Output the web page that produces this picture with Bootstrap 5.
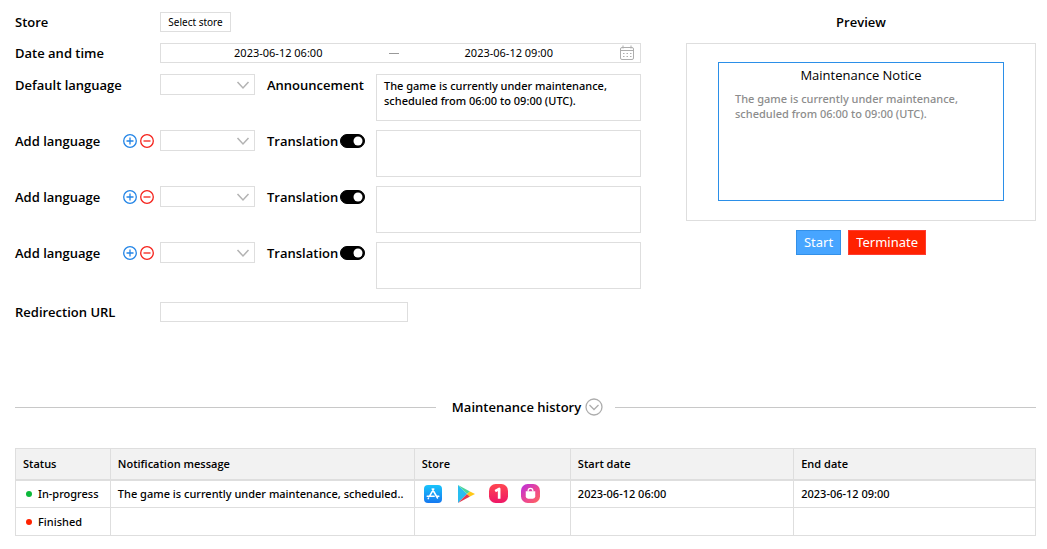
<!DOCTYPE html>
<html lang="en">
<head>
<meta charset="utf-8">
<meta name="viewport" content="width=device-width, initial-scale=1">
<title>Maintenance</title>
<link href="https://cdn.jsdelivr.net/npm/bootstrap@5.3.0/dist/css/bootstrap.min.css" rel="stylesheet">
<style>
  body { font-family: "Noto Sans", "Open Sans", sans-serif; font-size: 11px; line-height: 16px; color: #000; background: #fff; }
  .page { padding: 12px 11px 12px 15px; }
  .top-area { display: grid; grid-template-columns: minmax(0, 626fr) minmax(0, 350fr); column-gap: 45px; }
  .setting { display: grid; grid-template-columns: 145px 95px 121px minmax(0, 1fr); align-items: start; min-height: 21px; margin-bottom: 10px; }
  .setting .wide { grid-column: 2 / -1; }
  .setting label, .setting .caption, .heading { font-family: "Open Sans", "Noto Sans", sans-serif; font-size: 13px; line-height: 20px; font-weight: 600; margin: 0; }
  .language label { padding-top: 1px; }
  .setting .second { margin-left: 12px; }
  .form-switch { gap: 2px; }
  .box, .box.form-control, .box.form-select { border: 1px solid #dedede; border-radius: 0; background-color: #fff; color: #000; font-size: 11px; line-height: 15px; padding: 0 7px; height: 21px; min-height: 0; }
  .box.form-select { background-size: 14px 14px; background-position: right 4px center; background-image: url("data:image/svg+xml,%3csvg xmlns='http://www.w3.org/2000/svg' viewBox='0 0 14 14'%3e%3cpath fill='none' stroke='%23b3b3b3' stroke-width='1.5' d='M1.500 4l5.500 6 5.500-6'/%3e%3c/svg%3e"); }
  .box.message { height: 47px; padding: 3px 7px; margin-bottom: -1px; resize: none; overflow: hidden; font-weight: 500; }
  .box.store-btn { font-size: 10px; width: 71px; height: 20px; padding: 0; }
  .dates input { border: 0; background: none; text-align: center; padding: 0; min-width: 0; color: #000; line-height: 16px; }
  .box.dates { padding: 0 5px 0 7px; height: 20px; }
  .dash { width: 10px; height: 1px; background: #999; flex: none; }
  .icons { gap: 3px; padding-right: 6px; }
  .round { border: 0; padding: 0; background: none; line-height: 0; }
  .form-switch .form-check-input { width: 25px; height: 14px; margin: 1px 0 0; float: none; border: 1px solid #000; background-color: #000; }
  .box.url { width: 248px; max-width: 100%; height: 20px; }
  .title { margin-bottom: 11px; }
  .preview { border: 1px solid #dedede; height: 178px; padding: 18px 31px 19px 31px; }
  .notice { border: 1px solid #2b8fe8; height: 139px; padding: 2px 16px; color: #8c8c8c; line-height: 15px; font-weight: 500; }
  .notice h3 { font-family: "Open Sans", "Noto Sans", sans-serif; font-size: 13px; line-height: 20px; font-weight: 500; color: #000; margin: 0 0 6px; }
  .actions { gap: 7px; margin-top: 9px; }
  .action { border-radius: 0; font-size: 13px; line-height: 17px; padding: 3px 7px; color: #fff; }
  .start { background: #47a5ff; border-color: #3390e8; }
  .terminate { background: #ff2200; border-color: #ff3b30; }
  .history { margin: 65px 0 31px; }
  .rule { height: 1px; background: #c8c8c8; flex: 1; }
  .records { table-layout: fixed; border-color: #dedede; color: #000; }
  .records th, .records td { padding: 0 7px; vertical-align: middle; height: 28px; color: #000; white-space: nowrap; overflow: hidden; font-weight: 500; }
  .records th { height: 31px; font-family: "Open Sans", "Noto Sans", sans-serif; font-weight: 600; background: #f2f2f2; border-bottom-width: 2px; }
  .c-status { width: 9.3%; } .c-message { width: 29.8%; } .c-store { width: 15.3%; } .c-start { width: 21.9%; }
  .dot { width: 6px; height: 6px; border-radius: 50%; margin: 0 6px 0 3px; }
  .live { background: #0bb83a; } .done { background: #ff2200; }
  .stores { gap: 13px; padding-left: 1px; }
</style>
</head>
<body>
<svg class="d-none">
  <symbol id="plus" viewBox="0 0 14 14"><g fill="none" stroke="#2284e6" stroke-width="1.300"><circle cx="7" cy="7" r="6.300"/><path d="M3.500 7h7M7 3.500v7"/></g></symbol>
  <symbol id="minus" viewBox="0 0 14 14"><g fill="none" stroke="#f5221b" stroke-width="1.300"><circle cx="7" cy="7" r="6.300"/><path d="M3.500 7h7"/></g></symbol>
</svg>
<main class="page">
  <div class="top-area">
    <form>
      <div class="setting"><span class="caption">Store</span><div class="wide"><button type="button" class="box store-btn">Select store</button></div></div>
      <div class="setting">
        <label for="from">Date and time</label>
        <div class="wide box dates d-flex align-items-center">
          <input class="flex-fill" id="from" type="text" value="2023-06-12 06:00">
          <span class="dash"></span>
          <input class="flex-fill" type="text" aria-label="End" value="2023-06-12 09:00">
          <svg class="flex-shrink-0" width="16" height="16" viewBox="0 0 16 16" fill="none" stroke="#adadad"><rect x="1.500" y="2.500" width="13" height="12" rx="1.500"/><path d="M1.500 5.500h13M4 .5v3M12 .5v3"/><path d="M4 8.500h9M4 11.500h9" stroke-dasharray="1.500 2"/></svg>
        </div>
      </div>
      <div class="setting language">
        <label for="lang0">Default language</label>
        <select class="box form-select" id="lang0"><option></option></select>
        <label class="second" for="msg0">Announcement</label>
        <textarea class="box message form-control" id="msg0">The game is currently under maintenance, scheduled from 06:00 to 09:00 (UTC).</textarea>
      </div>
      <div class="setting language">
        <div class="d-flex align-items-center"><label class="me-auto" for="lang1">Add language</label><div class="icons d-flex"><button type="button" class="round" aria-label="Add"><svg width="14" height="14"><use href="#plus"/></svg></button><button type="button" class="round" aria-label="Remove"><svg width="14" height="14"><use href="#minus"/></svg></button></div></div>
        <select class="box form-select" id="lang1"><option></option></select>
        <div class="second form-switch d-flex align-items-center p-0"><label for="tr1">Translation</label><input class="form-check-input" type="checkbox" role="switch" id="tr1" checked></div>
        <textarea class="box message form-control" aria-label="Translation text 1"></textarea>
      </div>
      <div class="setting language">
        <div class="d-flex align-items-center"><label class="me-auto" for="lang2">Add language</label><div class="icons d-flex"><button type="button" class="round" aria-label="Add"><svg width="14" height="14"><use href="#plus"/></svg></button><button type="button" class="round" aria-label="Remove"><svg width="14" height="14"><use href="#minus"/></svg></button></div></div>
        <select class="box form-select" id="lang2"><option></option></select>
        <div class="second form-switch d-flex align-items-center p-0"><label for="tr2">Translation</label><input class="form-check-input" type="checkbox" role="switch" id="tr2" checked></div>
        <textarea class="box message form-control" aria-label="Translation text 2"></textarea>
      </div>
      <div class="setting language">
        <div class="d-flex align-items-center"><label class="me-auto" for="lang3">Add language</label><div class="icons d-flex"><button type="button" class="round" aria-label="Add"><svg width="14" height="14"><use href="#plus"/></svg></button><button type="button" class="round" aria-label="Remove"><svg width="14" height="14"><use href="#minus"/></svg></button></div></div>
        <select class="box form-select" id="lang3"><option></option></select>
        <div class="second form-switch d-flex align-items-center p-0"><label for="tr3">Translation</label><input class="form-check-input" type="checkbox" role="switch" id="tr3" checked></div>
        <textarea class="box message form-control" aria-label="Translation text 3"></textarea>
      </div>
      <div class="setting pt-1"><label for="url">Redirection URL</label><div class="wide"><input class="box form-control url" id="url" type="text"></div></div>
    </form>
    <section>
      <h2 class="heading title text-center">Preview</h2>
      <div class="preview"><div class="notice"><h3 class="text-center">Maintenance Notice</h3>The game is currently under maintenance,<br>scheduled from 06:00 to 09:00 (UTC).</div></div>
      <div class="actions d-flex justify-content-center"><button class="btn action start">Start</button><button class="btn action terminate">Terminate</button></div>
    </section>
  </div>
  <div class="history d-flex align-items-center">
    <span class="rule"></span>
    <h2 class="heading ms-3">Maintenance history</h2>
    <button class="round ms-1 me-2" aria-label="Toggle history"><svg width="18" height="18" viewBox="0 0 18 18" fill="none" stroke="#adadad" stroke-width="1.300"><circle cx="9" cy="9" r="8"/><path d="M4.500 7l4.500 4.500L13.500 7"/></svg></button>
    <span class="rule ms-1"></span>
  </div>
  <table class="table table-bordered records mb-0">
    <thead><tr><th class="c-status">Status</th><th class="c-message">Notification message</th><th class="c-store">Store</th><th class="c-start">Start date</th><th>End date</th></tr></thead>
    <tbody>
      <tr><td><div class="d-flex align-items-center"><span class="dot live"></span>In-progress</div></td><td>The game is currently under maintenance, scheduled..</td>
        <td><div class="d-flex align-items-center stores">
          <svg width="20" height="20" viewBox="0 0 20 20"><defs><linearGradient id="ga" x2="0" y2="1"><stop stop-color="#19c4fb"/><stop offset="1" stop-color="#1578f0"/></linearGradient></defs><rect x="1" y="1" width="18" height="18" rx="4" fill="url(#ga)"/><path d="M9.300 5l5.200 9M10.700 5l-4.300 7.300M4.200 12.300h7M13.500 12.300h2.300M5.600 14l-.4.700" stroke="#fff" stroke-width="1.500" stroke-linecap="round" fill="none"/></svg>
          <svg width="20" height="20" viewBox="0 0 20 20"><path d="M2 1v18l9-9z" fill="#28bdf0"/><path d="M2 1l12 6.500L11 10z" fill="#4bd69b"/><path d="M2 19l12-6.500L11 10z" fill="#e5394e"/><path d="M14 7.500l5 2.500-5 2.500L11 10z" fill="#ffc818"/></svg>
          <svg width="19" height="19" viewBox="0 0 20 20"><defs><linearGradient id="gb" x2="0" y2="1"><stop stop-color="#ff4751"/><stop offset="1" stop-color="#ee1666"/></linearGradient></defs><rect width="20" height="20" rx="7" fill="url(#gb)"/><path d="M6.500 7.500l4.200-2.300V15.500" fill="none" stroke="#fff" stroke-width="2.800" stroke-linejoin="round"/></svg>
          <svg width="19" height="19" viewBox="0 0 20 20"><defs><linearGradient id="gc" x2="1" y2="1"><stop stop-color="#b92ee0"/><stop offset=".6" stop-color="#f04a8b"/><stop offset="1" stop-color="#ff6659"/></linearGradient></defs><rect width="20" height="20" rx="7" fill="url(#gc)"/><path d="M5 7.500h10V13q0 2.500-2.500 2.500h-5Q5 15.500 5 13z" fill="#fff"/><path d="M7.500 8V7a2.500 2.500 0 0 1 5 0v1" fill="none" stroke="#fff" stroke-width="1.300"/></svg>
        </div></td><td>2023-06-12 06:00</td><td>2023-06-12 09:00</td></tr>
      <tr><td><div class="d-flex align-items-center"><span class="dot done"></span>Finished</div></td><td></td><td></td><td></td><td></td></tr>
    </tbody>
  </table>
</main>
<script src="https://cdn.jsdelivr.net/npm/bootstrap@5.3.0/dist/js/bootstrap.bundle.min.js"></script>
</body>
</html>
